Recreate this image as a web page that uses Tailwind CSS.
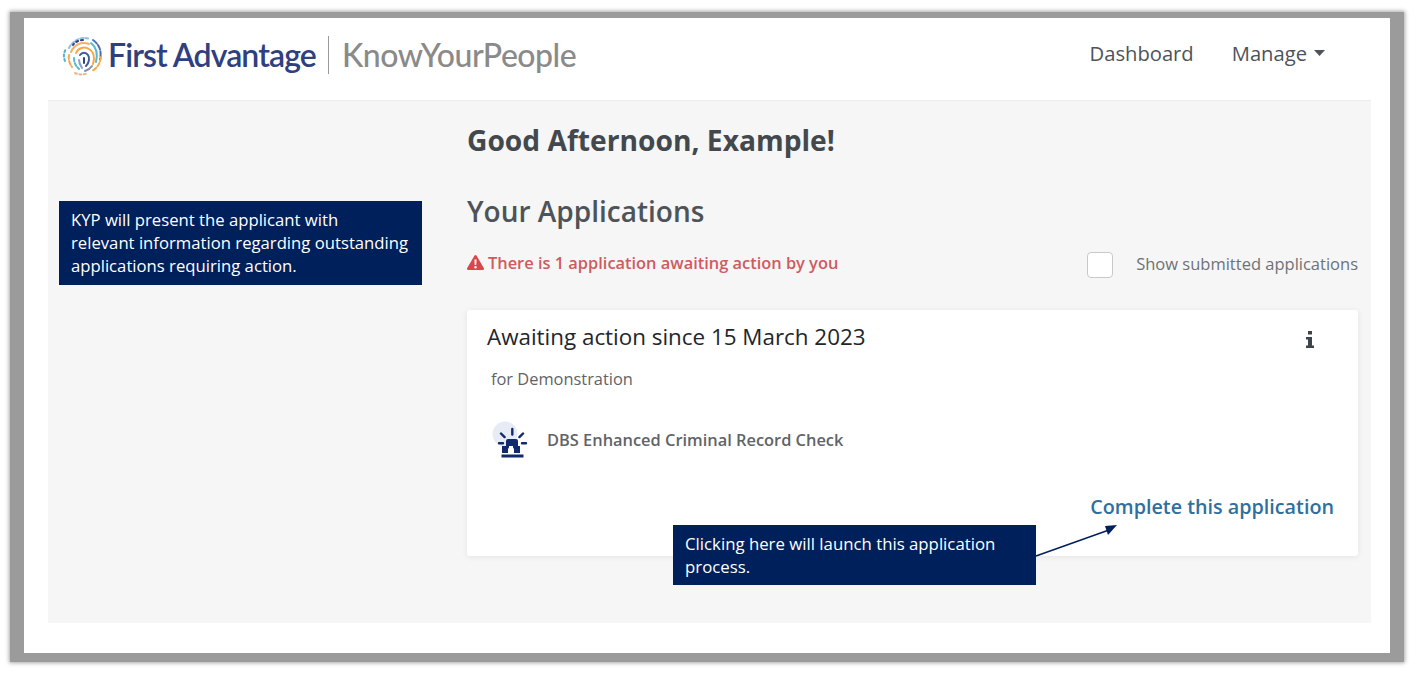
<!DOCTYPE html>
<html lang="en">
<head>
  <meta charset="UTF-8">
  <title>KnowYourPeople</title>
  <script src="https://cdn.jsdelivr.net/npm/@tailwindcss/browser@4"></script>
</head>
<body class="bg-white w-[1418px] h-[679px] overflow-hidden font-['Open_Sans',sans-serif]">
  <!-- grey picture frame -->
  <div class="ml-[10px] mt-[12px] w-[1394px] h-[650px] pt-[6px] pb-[9px] px-[14px] bg-[#9b9b9b] shadow-[0_0_4px_1px_#a8a8a8]">
    <div class="bg-white h-[635px] pl-[24px] pr-[19px] flex flex-col">
      <!-- header -->
      <header class="h-[82px] shrink-0 flex items-center justify-between">
        <div class="flex items-center pl-[14px] pb-[9px]">
          <svg class="w-[42px] h-[42px]" viewBox="0 0 42 42" fill="none" stroke-linecap="round" stroke-width="2">
            <path d="M7 14C11 6 20 2 28 5" stroke="#8fc1dc" stroke-dasharray="3 2"/>
            <path d="M3 27c-2-5-1-9 1-12" stroke="#4fb3d9" stroke-dasharray="2 2.500"/>
            <path d="M31 6c6 4 9 11 7 19" stroke="#4a6fb0" stroke-dasharray="5 2"/>
            <path d="M39 23c-1 7-4 11-9 14" stroke="#f5a94a" stroke-dasharray="4 2"/>
            <path d="M9 18c3-7 10-11 18-8" stroke="#f5b06a"/>
            <path d="M7 21c-1 5 1 9 3 12" stroke="#f5a94a" stroke-dasharray="4 2"/>
            <path d="M14 19c2-5 8-7 13-4s6 9 4 15" stroke="#f5a94a"/>
            <path d="M29 9c5 4 7 11 5 19" stroke="#57b8d6"/>
            <path d="M12 24c0 5 2 8 5 11" stroke="#57b8d6" stroke-dasharray="3 2"/>
            <path d="M18 21c2-3 6-3 8 0s1 8-2 11" stroke="#3d5a98"/>
            <path d="M17 26c0 3 1 5 3 8" stroke="#8aa0c8"/>
            <path d="M30 32c-2 3-4 4-7 5" stroke="#7f8fb8"/>
            <path d="M13 39c4 2 9 2 13 0" stroke="#f4b183" stroke-dasharray="2 2.500"/>
            <path d="M22 24v5" stroke="#2f3f80"/>
            <path d="M21 6c-4 0-8 2-10 5" stroke="#2f3f80" stroke-dasharray="2 3"/>
          </svg>
          <span class="ml-[4px] text-[32px] leading-none tracking-[-0.9px] text-[#2f3f80] font-['Lato',sans-serif] font-semibold">First Advantage</span>
          <span class="ml-[12px] mr-[13px] w-px h-[38px] bg-[#9a9a9a]"></span>
          <span class="text-[32px] leading-none tracking-[-0.5px] text-[#8a8a8a] font-['Lato',sans-serif] font-medium">KnowYourPeople</span>
        </div>
        <nav class="flex items-center text-[20.200px] text-[#4d5358] pr-[46px] pb-[12px]">
          <a class="mr-[38px]">Dashboard</a>
          <a class="flex items-center">Manage
            <svg class="ml-[7px] w-[11px] h-[6px]" viewBox="0 0 11 6"><path d="M0 0h11L5.500 6z" fill="#4d5358"/></svg>
          </a>
        </nav>
      </header>

      <!-- main -->
      <main class="relative h-[523px] bg-[#f6f6f6] border-t border-[#ececec] flex">
        <aside class="w-[419px] shrink-0 pl-[11px] pt-[100px]">
          <div class="w-[363px] h-[84px] bg-[#00205b] text-white text-[16.700px] font-medium leading-[23px] pl-[12px] pt-[7px]">
            KYP will present the applicant with<br>relevant information regarding outstanding<br>applications requiring action.
          </div>
        </aside>
        <section class="w-[891px]">
          <h1 class="mt-[20px] text-[28.200px] leading-[38px] font-bold text-[#43484d]">Good Afternoon, Example!</h1>
          <h2 class="mt-[33px] text-[28px] leading-[38px] font-semibold text-[#4d5358]">Your Applications</h2>
          <div class="mt-[19px] h-[32px] flex items-center justify-between">
            <p class="flex items-center text-[16.400px] font-semibold text-[#cf5a5f] pb-[4px]">
              <svg class="w-[17px] h-[15px] mr-[4px]" viewBox="0 0 17 15"><path fill-rule="evenodd" d="M8.500 0c.5 0 .9.3 1.100.7l7.200 12.400c.4.8-.1 1.900-1.100 1.900H1.300C.3 15-.2 13.900.2 13.100L7.400.7C7.600.3 8 0 8.500 0zM7.400 4.500l.3 5.500h1.600l.3-5.500zM8.500 11a1.300 1.300 0 1 0 0 2.600 1.300 1.300 0 0 0 0-2.600z" fill="#d9474c"/></svg>
              There is 1 application awaiting action by you
            </p>
            <label class="flex items-center text-[16.500px] text-[#6d7276]">
              <span class="w-[26px] h-[26px] bg-white border border-[#c9c9c9] rounded-[4px] mr-[23px]"></span>
              <span class="pb-[2px]">Show submitted applications</span>
            </label>
          </div>
          <!-- card -->
          <div class="mt-[29px] h-[246px] bg-white rounded-[3px] shadow-[0_1px_6px_rgba(0,0,0,0.08)] pl-[20px] pr-[24px] flex flex-col">
            <div class="flex items-start justify-between pt-[10px]">
              <h3 class="text-[22.400px] leading-[34px] text-[#22262a]">Awaiting action since 15 March 2023</h3>
              <svg class="mt-[11px] mr-[19px] w-[10px] h-[17px]" viewBox="0 0 10 17"><path d="M3 0h4v3.500H3zM1 6h6v8.500h2V17H1v-2.500h2V8.500H1z" fill="#3f4448"/></svg>
            </div>
            <p class="mt-[14px] pl-[4px] text-[16.400px] leading-[22px] text-[#5f6468]">for Demonstration</p>
            <div class="mt-[30px] ml-[3px] flex items-center">
              <svg class="w-[40px] h-[40px]" viewBox="0 0 40 40">
                <circle cx="15" cy="14" r="12.500" fill="#e6ebf5"/>
                <path d="M11.500 34.500h22v3h-22zM16 21a2 2 0 0 1 2-2h8a2 2 0 0 1 2 2v5h2v7h-6v-3.500a2.500 2.500 0 0 0-1-2v-1.500h-4v1.500a2.500 2.500 0 0 0-1 2V33h-6v-7h4z" fill="#12296f"/>
                <path d="M22.300 9v5.500M11 13.500l3.600 3.600M33 13.500l-3.600 3.600M9 23.300h4M32 23.300h4" stroke="#12296f" stroke-width="2.400" stroke-linecap="round"/>
              </svg>
              <span class="ml-[17px] text-[16.400px] font-semibold text-[#5f6468]">DBS Enhanced Criminal Record Check</span>
            </div>
            <a class="mt-auto mb-[35px] self-end text-[19.750px] leading-[28px] font-semibold text-[#2f6f9f]">Complete this application</a>
          </div>
        </section>
        <!-- overlay callout and arrow -->
        <div class="absolute left-[625px] top-[424px] w-[363px] h-[60px] bg-[#00205b] text-white text-[16.800px] font-medium leading-[23px] pl-[12px] pt-[7px]">
          Clicking here will launch this application<br>process.
        </div>
        <svg class="absolute left-[987px] top-[422px] w-[84px] h-[36px]" viewBox="0 0 84 36">
          <path d="M1 33L74 7" stroke="#00205b" stroke-width="1.500"/>
          <path d="M82 2L70 3l3 9z" fill="#00205b"/>
        </svg>
      </main>
    </div>
  </div>
</body>
</html>
